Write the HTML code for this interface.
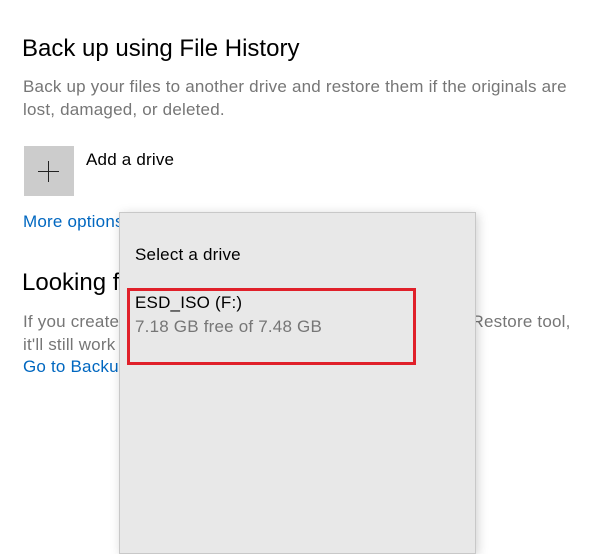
<!DOCTYPE html>
<html><head><style>
body{margin:0;width:613px;height:545px;background:#fff;font-family:"Liberation Sans",sans-serif;position:relative;overflow:hidden}
div{position:absolute;white-space:nowrap}
.h{font-size:24px;color:#000}
.p{font-size:17px;color:#767676;letter-spacing:0.2px}
.l{font-size:17px;color:#0067c0;letter-spacing:0.2px}
</style></head><body>
<div class="h" style="left:22px;top:35px">Back up using File History</div>
<div class="p" style="left:23px;top:75px;line-height:23px">Back up your files to another drive and restore them if the originals are<br>lost, damaged, or deleted.</div>
<div style="left:24px;top:146px;width:50px;height:50px;background:#cccccc"></div>
<div style="left:38px;top:171px;width:21px;height:1px;background:#222"></div>
<div style="left:48px;top:161px;width:1px;height:21px;background:#222"></div>
<div style="left:86px;top:150px;font-size:17px;color:#000;letter-spacing:0.2px">Add a drive</div>
<div class="l" style="left:23px;top:212px">More options</div>
<div class="h" style="left:22px;top:269px">Looking for an older backup?</div>
<div class="p" style="left:23px;top:310px;line-height:23px">If you created a backup using the Windows 7 Backup and Restore tool,<br>it'll still work in Windows 10.</div>
<div class="l" style="left:23px;top:357px">Go to Backup and Restore (Windows 7)</div>
<div style="left:119px;top:212px;width:355px;height:340px;background:#e8e8e8;border:1px solid #c8c8c8;box-shadow:2px 2px 10px rgba(0,0,0,0.18)"></div>
<div style="left:135px;top:245px;font-size:17px;color:#000;letter-spacing:0.2px">Select a drive</div>
<div style="left:127px;top:288px;width:283px;height:71px;border:3px solid #e0202a"></div>
<div style="left:135px;top:293px;font-size:17px;color:#000;letter-spacing:0.2px">ESD_ISO (F:)</div>
<div style="left:135px;top:317px;font-size:17px;color:#767676;letter-spacing:0.2px">7.18 GB free of 7.48 GB</div>
</body></html>
